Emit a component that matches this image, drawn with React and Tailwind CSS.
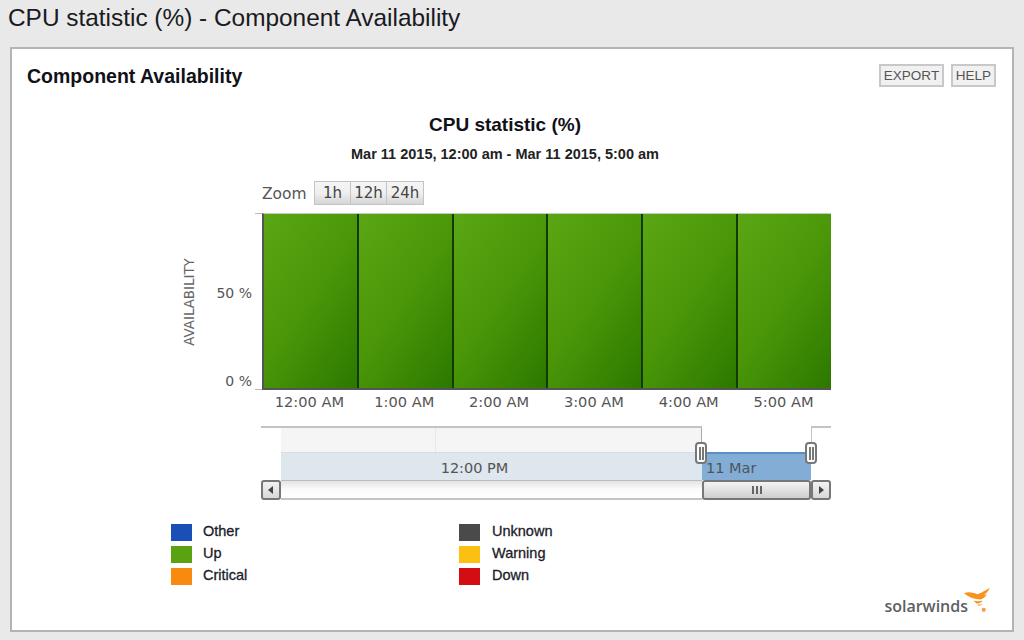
import React from 'react';

const hours = ['12:00 AM', '1:00 AM', '2:00 AM', '3:00 AM', '4:00 AM', '5:00 AM'];

const legendLeft = [
  { label: 'Other', color: 'bg-[#1a4fb8]' },
  { label: 'Up', color: 'bg-[#5aa212]' },
  { label: 'Critical', color: 'bg-[#f98a10]' },
];

const legendRight = [
  { label: 'Unknown', color: 'bg-[#4a4a4a]' },
  { label: 'Warning', color: 'bg-[#fcc013]' },
  { label: 'Down', color: 'bg-[#d40d14]' },
];

function LegendColumn({ items, className, gap }) {
  return (
    <div className={`flex flex-col ${className}`}>
      {items.map((item) => (
        <div key={item.label} className={`flex items-center h-[22px] ${gap}`}>
          <span className={`w-[21px] h-[17px] ${item.color}`} />
          <span className="text-[14.5px] text-[#1c1c2a] [font-family:'Liberation_Sans',sans-serif] [-webkit-text-stroke:0.3px_#1c1c2a]">
            {item.label}
          </span>
        </div>
      ))}
    </div>
  );
}

function ZoomButton({ label, last }) {
  return (
    <button
      className={`w-[36px] h-full text-[15px] text-[#444] bg-gradient-to-b from-[#f5f5f5] via-[#efefef] to-[#d5d5d5] ${last ? '' : 'border-r border-[#c4c4c4]'}`}
    >
      {label}
    </button>
  );
}

function ScrollButton({ dir }) {
  return (
    <div className="w-[20px] h-[20px] rounded-[3px] border-2 border-[#777] bg-gradient-to-b from-[#f2f2f2] to-[#d8d8d8] flex items-center justify-center">
      <svg width="6" height="8" viewBox="0 0 6 8">
        <path d={dir === 'left' ? 'M5 0v8L0 4z' : 'M1 0v8l5-4z'} fill="#444" />
      </svg>
    </div>
  );
}

function Handle({ className }) {
  return (
    <div className={`absolute top-[16px] w-[12px] h-[22px] rounded-[4px] border-2 border-[#777] bg-white flex items-center justify-center gap-px ${className}`}>
      <span className="w-[2px] h-[13px] bg-[#777]" />
      <span className="w-[2px] h-[13px] bg-[#777]" />
    </div>
  );
}

function Navigator() {
  return (
    <div className="relative ml-[249px] mt-[14px] w-[570px] text-[14.5px] text-[#555]">
      {/* top outline + empty series band */}
      <div className="flex h-[26px]">
        <div className="w-[20px] border-t-2 border-[#c4c4c4]" />
        <div className="w-[421px] flex border-t-2 border-[#c4c4c4] border-r border-r-[#aaa] bg-[#f5f5f5]">
          <div className="w-[155px] border-r border-[#e8e8e8]" />
        </div>
        <div className="w-[109px]" />
        <div className="w-[20px] border-t-2 border-l border-[#c4c4c4]" />
      </div>

      {/* time band */}
      <div className="flex h-[28px]">
        <div className="w-[20px]" />
        <div className="w-[421px] bg-[#dee6ee] border-t border-[#d5dfe9] flex items-end justify-center pr-[34px] leading-[24px]">
          12:00 PM
        </div>
        <div className="w-[109px] bg-[#84add6] border-t-2 border-[#5590c6] flex items-end pl-[4px] leading-[24px] text-[#4b5560]">
          11 Mar
        </div>
      </div>

      {/* scrollbar */}
      <div className="flex h-[20px]">
        <ScrollButton dir="left" />
        <div className="w-[421px] border-t border-t-[#bbb] border-b-2 border-b-[#c4c4c4] bg-gradient-to-b from-[#e4e4e4] via-[#fbfbfb] to-white" />
        <div className="w-[109px] rounded-[3px] border-2 border-[#777] bg-gradient-to-b from-[#f4f4f4] to-[#cfcfcf] flex items-center justify-center gap-[2px]">
          <span className="w-[2px] h-[8px] bg-[#666]" />
          <span className="w-[2px] h-[8px] bg-[#666]" />
          <span className="w-[2px] h-[8px] bg-[#666]" />
        </div>
        <ScrollButton dir="right" />
      </div>

      <Handle className="left-[434px]" />
      <Handle className="left-[544px]" />
    </div>
  );
}

function Logo() {
  return (
    <div className="absolute right-[21px] bottom-[14px] flex items-end">
      <span className="text-[16px] leading-[20px] font-semibold text-[#5c5f62] [font-family:'Open_Sans',sans-serif]">
        solarwinds
      </span>
      <svg width="27" height="25" viewBox="0 0 26 24" className="-ml-[4px] mb-[3px]">
        <path d="M0 5c5-2 10 0 13 1 3-1 6-3 12-6-2 3-3 5-6 7l3-1c-1 2-3 4-6 5-6 0-11-2-16-6z" fill="#f79421" />
        <path d="M9 12c3 1 6 1 9 0-1 2-3 3-6 3z" fill="#f79421" />
        <path d="M13 16c2 0 3 0 5-1-1 1-2 2-4 2z" fill="#f79421" />
        <circle cx="19" cy="21" r="2" fill="#f5a04a" />
      </svg>
    </div>
  );
}

export default function App() {
  return (
    <div className="w-[1024px] h-[640px] bg-[#e9e9e9] overflow-hidden [font-family:'Liberation_Sans',Arial,sans-serif]">
      <h1 className="h-[47px] pl-[8px] pt-[4px] text-[24.4px] leading-[28px] text-[#1a1a22]">
        CPU statistic (%) - Component Availability
      </h1>

      <div className="relative ml-[10px] w-[1004px] h-[585px] border-2 border-[#b4b4b4] bg-white">
        <div className="flex justify-between items-start pl-[15px] pr-[16px] pt-[15px]">
          <h2 className="text-[19.5px] leading-[24px] font-bold text-[#111118]">Component Availability</h2>
          <div className="flex gap-[7px]">
            <button className="w-[65px] h-[23px] border-2 border-[#c8c8c8] bg-[#f1f1f1] text-[13.5px] text-[#555]">EXPORT</button>
            <button className="w-[45px] h-[23px] border-2 border-[#c8c8c8] bg-[#f1f1f1] text-[13.5px] text-[#555]">HELP</button>
          </div>
        </div>

        <div className="text-center pr-[14px] mt-[25px]">
          <div className="text-[19px] leading-[24px] font-bold text-[#111118]">CPU statistic (%)</div>
          <div className="mt-[9px] text-[14.5px] leading-[16px] font-bold text-[#222]">
            Mar 11 2015, 12:00 am - Mar 11 2015, 5:00 am
          </div>
        </div>

        {/* chart */}
        <div className="[font-family:'DejaVu_Sans',sans-serif]">
          <div className="ml-[250px] mt-[19px] h-[24px] flex items-center">
            <span className="text-[15.5px] text-[#555] w-[52px] mt-[3px]">Zoom</span>
            <div className="flex h-full border border-[#c4c4c4]">
              <ZoomButton label="1h" />
              <ZoomButton label="12h" />
              <ZoomButton label="24h" last />
            </div>
          </div>

          <div className="mt-[8px] flex h-[177px]">
            <div className="relative w-[250px] shrink-0 text-[14px] text-[#555]">
              <span className="absolute left-[178px] top-[89px] -translate-x-1/2 -translate-y-1/2 -rotate-90 text-[13.4px] text-[#666] whitespace-nowrap">
                AVAILABILITY
              </span>
              <span className="absolute right-[10px] top-[70px]">50 %</span>
              <span className="absolute right-[10px] top-[158px]">0 %</span>
              <span className="absolute right-0 top-0 w-[7px] h-px bg-[#bbb]" />
              <span className="absolute right-0 bottom-0 w-[7px] h-px bg-[#bbb]" />
            </div>
            <div className="w-[569px] flex border-l-2 border-b-2 border-t border-l-[#555] border-b-[#555] border-t-[#c2cdb8]">
              {hours.map((h, i) => (
                <div
                  key={h}
                  className={`flex-1 bg-[linear-gradient(125deg,#5aa613_0%,#4a9608_50%,#2c7800_100%)] ${i < 5 ? 'border-r-2 border-[#123a06]' : ''}`}
                />
              ))}
            </div>
          </div>

          <div className="ml-[250px] w-[569px] flex mt-[2px] text-[14.6px] leading-[20px] text-[#555]">
            {hours.map((h) => (
              <div key={h} className="flex-1 text-center">{h}</div>
            ))}
          </div>

          <Navigator />
        </div>

        <div className="flex ml-[159px] mt-[21px]">
          <LegendColumn items={legendLeft} className="w-[288px]" gap="gap-[11px]" />
          <LegendColumn items={legendRight} gap="gap-[12px]" />
        </div>

        <Logo />
      </div>
    </div>
  );
}
